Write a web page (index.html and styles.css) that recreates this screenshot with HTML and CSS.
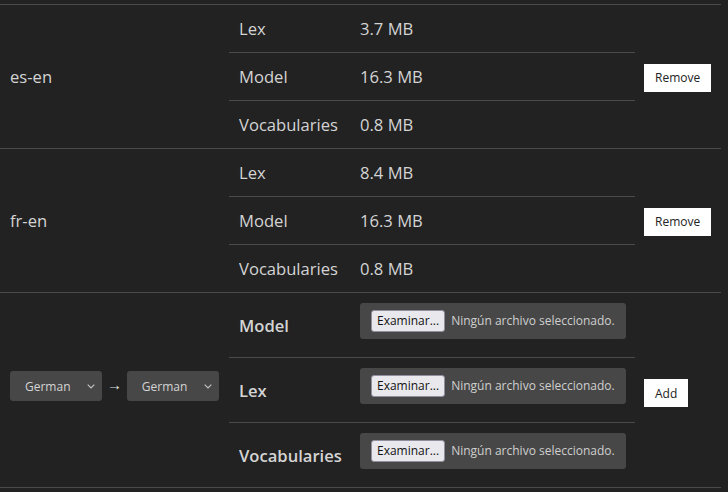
FILE: index.html
```html
<!DOCTYPE html>
<html lang="es">
<head>
<meta charset="utf-8">
<link rel="stylesheet" href="styles.css">
</head>
<body>
<table class="models">
  <tbody class="group">
    <tr>
      <td class="pair" rowspan="3">es-en</td>
      <td class="label">Lex</td>
      <td class="value">3.7 MB</td>
      <td class="action" rowspan="3"><button class="btn">Remove</button></td>
    </tr>
    <tr class="sub">
      <td class="label">Model</td>
      <td class="value">16.3 MB</td>
    </tr>
    <tr class="sub">
      <td class="label">Vocabularies</td>
      <td class="value">0.8 MB</td>
    </tr>
  </tbody>
  <tbody class="group">
    <tr>
      <td class="pair" rowspan="3">fr-en</td>
      <td class="label">Lex</td>
      <td class="value">8.4 MB</td>
      <td class="action" rowspan="3"><button class="btn">Remove</button></td>
    </tr>
    <tr class="sub">
      <td class="label">Model</td>
      <td class="value">16.3 MB</td>
    </tr>
    <tr class="sub">
      <td class="label">Vocabularies</td>
      <td class="value">0.8 MB</td>
    </tr>
  </tbody>
  <tbody class="group add">
    <tr>
      <td class="pair" rowspan="3">
        <div class="langs">
          <div class="select"><span>German</span><svg width="8" height="5" viewBox="0 0 8 5"><path d="M0.7 0.7l3.3 3.3 3.3-3.3" fill="none" stroke="#c4c4c4" stroke-width="1.1"/></svg></div>
          <span class="arrow">→</span>
          <div class="select"><span>German</span><svg width="8" height="5" viewBox="0 0 8 5"><path d="M0.7 0.7l3.3 3.3 3.3-3.3" fill="none" stroke="#c4c4c4" stroke-width="1.1"/></svg></div>
        </div>
      </td>
      <td class="label strong">Model</td>
      <td class="value"><div class="file"><span class="browse">Examinar...</span><span class="none">Ningún archivo seleccionado.</span></div></td>
      <td class="action" rowspan="3"><button class="btn add-btn">Add</button></td>
    </tr>
    <tr class="sub">
      <td class="label strong">Lex</td>
      <td class="value"><div class="file"><span class="browse">Examinar...</span><span class="none">Ningún archivo seleccionado.</span></div></td>
    </tr>
    <tr class="sub">
      <td class="label strong">Vocabularies</td>
      <td class="value"><div class="file"><span class="browse">Examinar...</span><span class="none">Ningún archivo seleccionado.</span></div></td>
    </tr>
  </tbody>
</table>
</body>
</html>
```

FILE: styles.css
```css
html, body {
  margin: 0;
  background: #222222;
}
body {
  padding-top: 4px;
  font-family: "Open Sans", "Noto Sans", "Liberation Sans", sans-serif;
  color: #d4d4d4;
  font-size: 16.6px;
}
.models {
  border-collapse: collapse;
  width: 721px;
  table-layout: fixed;
}
.group {
  border-top: 1px solid #4a4a4a;
  border-bottom: 1px solid #4a4a4a;
}
.group td {
  padding: 0 10px;
  height: 47px;
  vertical-align: middle;
  white-space: nowrap;
}
.sub td {
  border-top: 1px solid #4a4a4a;
}
.add td {
  height: 64px;
}
.pair { width: 209px; }
.label { width: 101px; }
.value { width: 265px; }
.action { width: 67px; padding-left: 9px !important; }
.strong { font-weight: 600; }
.btn {
  font-family: "Open Sans", "Noto Sans", sans-serif;
  font-size: 12px;
  color: #222;
  background: #fff;
  border: none;
  height: 28px;
  padding: 0 11px;
  margin-top: 2px;
  border-radius: 0;
}
.add-btn {
  margin-top: 6px;
}
.langs {
  display: flex;
  align-items: center;
  margin-bottom: 8px;
}
.select {
  display: flex;
  align-items: center;
  justify-content: space-between;
  width: 93px;
  height: 30px;
  box-sizing: border-box;
  padding: 0 7px 0 15px;
  background: #474747;
  border-radius: 3px;
  font-size: 12px;
  color: #d4d4d4;
}
.arrow {
  width: 25px;
  text-align: center;
  font-size: 15px;
  line-height: 1;
  color: #e0e0e0;
  margin-top: -4px;
}
.file {
  display: flex;
  align-items: center;
  gap: 6px;
  width: 266px;
  height: 36px;
  box-sizing: border-box;
  padding: 0 11px;
  margin-bottom: 9px;
  background: #474747;
  border-radius: 3px;
  font-size: 12px;
}
.browse {
  display: inline-flex;
  align-items: center;
  height: 22px;
  box-sizing: border-box;
  padding: 0 5px;
  background: #e9e9ed;
  border: 1px solid #8f8f9d;
  border-radius: 3px;
  color: #111;
}
.none {
  color: #cfcfcf;
}
```
